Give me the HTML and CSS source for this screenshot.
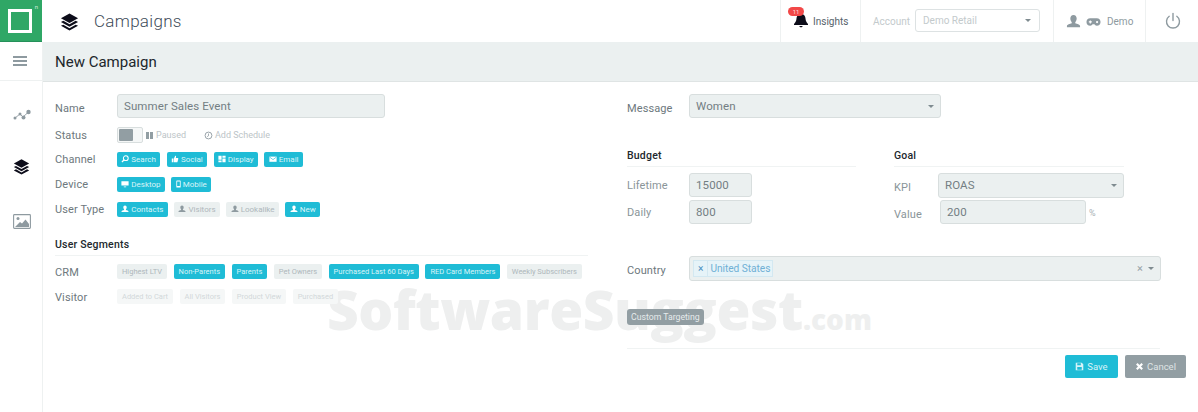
FILE: index.html
```html
<!DOCTYPE html>
<html lang="en">
<head>
<meta charset="utf-8">
<title>Campaigns</title>
<link rel="stylesheet" href="styles.css">
</head>
<body>
<svg class="sprite" width="0" height="0" aria-hidden="true">
  <defs>
    <symbol id="i-user" viewBox="0 0 16 16"><path d="M8 1c2.200 0 3.400 1.700 3.400 3.800 0 1.600-.7 3-1.500 3.800v1.300c1.900.7 5.100 1.400 5.100 3.100v1H1v-1c0-1.700 3.200-2.400 5.100-3.100V8.600C5.300 7.800 4.600 6.400 4.600 4.800 4.600 2.700 5.800 1 8 1z"/></symbol>
    <symbol id="i-layers" viewBox="0 0 20 20"><path d="M10 1.500 19 6.500 10 11.500 1 6.500z" fill="#0d0d1a"/><path d="M3.500 9.300 1 10.600 10 15.600 19 10.600 16.500 9.300 10 13z" fill="#0d0d1a"/><path d="M3.500 13.300 1 14.600 10 19.500 19 14.600 16.500 13.300 10 17z" fill="#0d0d1a"/></symbol>
  </defs>
</svg>
<div class="app">
  <header class="topbar">
    <div class="logo">
      <span class="logo-square"></span>
      <span class="logo-mark">n</span>
    </div>
    <div class="page-heading">
      <svg class="heading-icon"><use href="#i-layers"/></svg>
      <span>Campaigns</span>
    </div>
    <div class="top-item insights">
      <span class="bell-wrap">
        <svg class="bell" viewBox="0 0 16 16"><path d="M8 1c.8 0 1.300.5 1.400 1.100 2 .6 2.900 2.300 3.100 4.400.2 2.400 1 3.800 2.500 5.500v1H1v-1c1.500-1.700 2.300-3.100 2.500-5.500.2-2.100 1.100-3.800 3.100-4.400C6.700 1.500 7.200 1 8 1zM6.300 14h3.400c-.2.800-.9 1.300-1.700 1.300S6.500 14.800 6.300 14z" fill="#0d0d1a"/></svg>
        <span class="badge">11</span>
      </span>
      <span>Insights</span>
    </div>
    <div class="top-item account">
      <span class="account-label">Account</span>
      <div class="account-select"><span>Demo Retail</span><i class="caret"></i></div>
    </div>
    <div class="top-item user">
      <svg class="user-icon"><use href="#i-user"/></svg>
      <svg class="gamepad" viewBox="0 0 16 10"><path d="M4.500 1h7C14 1 15.500 2.800 15.500 5S14 9 11.500 9c-1.300 0-2-.8-2.500-1.500H7C6.500 8.200 5.800 9 4.500 9 2 9 .5 7.200.5 5S2 1 4.500 1z" fill="#8e9aa0"/><path d="M3 4.300h1V3.300h1.200v1h1v1.300h-1v1H4v-1H3z" fill="#fff"/><circle cx="11.800" cy="5" r="1.200" fill="#fff"/></svg>
      <span>Demo</span>
    </div>
    <div class="top-item power">
      <svg viewBox="0 0 18 18" class="power-icon"><path d="M5.200 4.300a6.500 6.500 0 1 0 7.600 0" fill="none" stroke="#8e9aa0" stroke-width="1.400" stroke-linecap="round"/><path d="M9 1.500v7" fill="none" stroke="#8e9aa0" stroke-width="1.400" stroke-linecap="round"/></svg>
    </div>
  </header>

  <div class="body-row">
    <nav class="sidebar">
      <div class="menu-cell">
        <span class="hamburger"><i></i><i></i><i></i></span>
      </div>
      <svg class="nav-icon nav-trend" viewBox="0 0 18 12"><path d="M2 9 7 5 10 8 15.500 3" fill="none" stroke="#8e9aa0" stroke-width=".9"/><circle cx="2" cy="9" r="1.500" fill="#8e9aa0"/><circle cx="7" cy="5" r="1.500" fill="#8e9aa0"/><circle cx="10.500" cy="8.500" r="2" fill="#8e9aa0"/><circle cx="15.500" cy="3" r="2.200" fill="#8e9aa0"/></svg>
      <svg class="nav-icon nav-layers"><use href="#i-layers"/></svg>
      <svg class="nav-icon nav-image" viewBox="0 0 18 15"><rect x=".6" y=".6" width="16.800" height="13.800" rx=".8" fill="#fff" stroke="#8e9aa0" stroke-width="1.100"/><circle cx="5" cy="4.500" r="1.500" fill="#8e9aa0"/><path d="M2 13 7 8 9 9.500 12.500 5.500 16 10v3z" fill="#8e9aa0"/></svg>
    </nav>

    <main class="main">
      <div class="watermark">SoftwareSuggest<span>.com</span></div>
      <div class="title-bar">New Campaign</div>
      <div class="columns">
        <section class="left-col">
          <div class="form-row row-name">
            <label class="row-label">Name</label>
            <div class="field field-name">Summer Sales Event</div>
          </div>
          <div class="form-row row-status">
            <label class="row-label">Status</label>
            <span class="toggle"><i></i></span>
            <span class="pause"><i></i><i></i></span>
            <span class="status-text">Paused</span>
            <svg class="clock" viewBox="0 0 10 10"><circle cx="5" cy="5" r="3.800" fill="none" stroke="#8e9aa0" stroke-width="1"/><path d="M5 2.800V5.300L3.500 6.300" fill="none" stroke="#8e9aa0" stroke-width=".9"/></svg>
            <span class="status-text">Add Schedule</span>
          </div>
          <div class="form-row row-chips">
            <label class="row-label">Channel</label>
            <div class="chips">
              <span class="chip on"><svg viewBox="0 0 10 10"><circle cx="6" cy="4" r="3" fill="none" stroke="#fff" stroke-width="1.300"/><path d="M4 6 1.200 8.800" stroke="#fff" stroke-width="1.600"/></svg>Search</span>
              <span class="chip on"><svg viewBox="0 0 10 10"><path d="M1 4.500h2v4.500H1zM3.600 4.500 5.300 1c.9 0 1.200.7 1 1.500l-.3 1.200h3v1.700L8 9H3.600z" fill="#fff"/></svg>Social</span>
              <span class="chip on"><svg viewBox="0 0 10 10"><path d="M.5 1h4v5h-4zM5.500 1h4v2.500h-4zM5.500 4.500h4v4.500h-4zM.5 7h4v2h-4z" fill="#fff"/></svg>Display</span>
              <span class="chip on"><svg viewBox="0 0 10 10"><path d="M.5 2h9v6.500h-9z" fill="#fff"/><path d="M1 2.800 5 5.800 9 2.800" fill="none" stroke="#1fbcd6" stroke-width=".8"/></svg>Email</span>
            </div>
          </div>
          <div class="form-row row-chips">
            <label class="row-label">Device</label>
            <div class="chips">
              <span class="chip on"><svg viewBox="0 0 10 10"><path d="M.5 1.500h9v5.500h-9zM3.500 8h3v1h-3z" fill="#fff"/></svg>Desktop</span>
              <span class="chip on"><svg class="narrow" viewBox="0 0 6 10"><path d="M1 .5h4a.7.7 0 0 1 .7.7v7.600a.7.7 0 0 1-.7.7H1a.7.7 0 0 1-.7-.7V1.200A.7.7 0 0 1 1 .5zm.3 1.500v5.500h3.400V2z" fill="#fff"/></svg>Mobile</span>
            </div>
          </div>
          <div class="form-row row-chips">
            <label class="row-label">User Type</label>
            <div class="chips">
              <span class="chip on"><svg><use href="#i-user" fill="#fff"/></svg>Contacts</span>
              <span class="chip off"><svg><use href="#i-user" fill="#8e9aa0"/></svg>Visitors</span>
              <span class="chip off"><svg><use href="#i-user" fill="#8e9aa0"/></svg>Lookalike</span>
              <span class="chip on"><svg><use href="#i-user" fill="#fff"/></svg>New</span>
            </div>
          </div>
          <h3 class="section-heading segments-heading">User Segments</h3>
          <div class="form-row row-seg">
            <label class="row-label">CRM</label>
            <div class="chips">
              <span class="chip off">Highest LTV</span>
              <span class="chip on">Non-Parents</span>
              <span class="chip on">Parents</span>
              <span class="chip off">Pet Owners</span>
              <span class="chip on">Purchased Last 60 Days</span>
              <span class="chip on">RED Card Members</span>
              <span class="chip off">Weekly Subscribers</span>
            </div>
          </div>
          <div class="form-row row-seg row-visitor">
            <label class="row-label">Visitor</label>
            <div class="chips">
              <span class="chip faint">Added to Cart</span>
              <span class="chip faint">All Visitors</span>
              <span class="chip faint">Product View</span>
              <span class="chip faint">Purchased</span>
            </div>
          </div>
        </section>

        <section class="right-col">
          <div class="form-row row-message">
            <label class="row-label">Message</label>
            <div class="field field-select field-message"><span>Women</span><i class="caret"></i></div>
          </div>
          <div class="split">
            <div class="budget">
              <h3 class="section-heading">Budget</h3>
              <div class="form-row row-num">
                <label class="row-label muted">Lifetime</label>
                <div class="field field-num">15000</div>
              </div>
              <div class="form-row row-num row-daily">
                <label class="row-label muted">Daily</label>
                <div class="field field-num">800</div>
              </div>
            </div>
            <div class="goal">
              <h3 class="section-heading">Goal</h3>
              <div class="form-row row-num row-kpi">
                <label class="row-label muted label-kpi">KPI</label>
                <div class="field field-select field-kpi"><span>ROAS</span><i class="caret"></i></div>
              </div>
              <div class="form-row row-num row-value">
                <label class="row-label muted label-value">Value</label>
                <div class="field field-value">200</div>
                <span class="percent">%</span>
              </div>
            </div>
          </div>
          <div class="form-row row-country">
            <label class="row-label">Country</label>
            <div class="field field-select field-country">
              <span class="token"><b>×</b><span>United States</span></span>
              <span class="clear">×</span><i class="caret"></i>
            </div>
          </div>
          <div class="custom-row"><span class="chip custom">Custom Targeting</span></div>
          <div class="actions">
            <button class="btn btn-save" type="button"><svg viewBox="0 0 10 10"><path d="M1 .8h6.500L9.200 2.500v6.700H.8V.8z" fill="#d6f3f8"/><path d="M2.500 1.500h4v2h-4zM2.500 5.500h5v3h-5z" fill="#1fbcd6"/></svg>Save</button>
            <button class="btn btn-cancel" type="button"><svg viewBox="0 0 10 10"><path d="M2 2 8 8M8 2 2 8" stroke="#fff" stroke-width="2.400"/></svg>Cancel</button>
          </div>
        </section>
      </div>
    </main>
  </div>
</div>
</body>
</html>
```
FILE: styles.css
```css
* { box-sizing: border-box; }
html, body { margin: 0; padding: 0; height: 100%; }
body {
  width: 1198px;
  height: 412px;
  overflow: hidden;
  background: #fff;
  font-family: Roboto, "Liberation Sans", sans-serif;
  color: #5f6b70;
}
.sprite { position: absolute; }
.app { display: flex; flex-direction: column; height: 412px; }

.topbar { display: flex; height: 42px; background: #fff; align-items: stretch; }
.logo {
  position: relative;
  width: 42px;
  background: #2fa766;
  border-bottom: 1px solid #25905a;
  display: flex;
  align-items: center;
  justify-content: center;
}
.logo-square { width: 24px; height: 24px; border: 3px solid #fff; margin-left: -2px; margin-top: 1px; }
.logo-mark { position: absolute; top: 3px; right: 4px; font-size: 6px; line-height: 7px; color: #cfeadb; }
.page-heading {
  display: flex;
  align-items: center;
  flex: 1;
  padding-left: 18px;
  font-size: 17px;
  font-weight: 300;
  letter-spacing: .3px;
  color: #3f4d5a;
}
.heading-icon { width: 19px; height: 19px; margin-right: 15px; }
.top-item {
  display: flex;
  flex: none;
  align-items: center;
  border-left: 1px solid #eef1f1;
  font-size: 10px;
}
.insights { width: 80px; padding-left: 12px; color: #55626a; }
.bell-wrap { position: relative; width: 16px; height: 16px; margin-right: 4px; margin-top: -2px; }
.bell { width: 16px; height: 16px; display: block; }
.badge {
  position: absolute;
  left: -5px;
  top: -5px;
  width: 16px;
  height: 9px;
  border-radius: 5px;
  background: #f24848;
  color: #fdd;
  font-size: 6px;
  line-height: 9px;
  text-align: center;
}
.account { width: 193px; padding-left: 12px; color: #c3cacc; }
.account-label { margin-right: 5px; }
.account-select {
  width: 125px;
  height: 23px;
  margin-top: -1px;
  padding: 0 8px 0 7px;
  border: 1px solid #dde2e3;
  border-radius: 3px;
  display: flex;
  align-items: center;
  justify-content: space-between;
}
.user { width: 92px; padding-left: 12px; color: #8e9aa0; }
.user-icon { width: 15px; height: 15px; fill: #8e9aa0; margin-right: 5px; }
.gamepad { width: 15px; height: 10px; margin-right: 6px; margin-top: 2px; }
.power { width: 53px; padding-left: 18px; }
.power-icon { width: 18px; height: 18px; }

.caret {
  width: 0;
  height: 0;
  border-left: 3px solid transparent;
  border-right: 3px solid transparent;
  border-top: 3px solid #7f8b90;
  flex: none;
}

.body-row { display: flex; flex: 1; min-height: 0; }
.sidebar {
  width: 43px;
  border-right: 1px solid #eef1f1;
  display: flex;
  flex-direction: column;
  align-items: center;
}
.menu-cell {
  width: 100%;
  height: 39px;
  border-bottom: 1px solid #eef1f1;
  display: flex;
  align-items: center;
  justify-content: center;
}
.hamburger { display: flex; flex-direction: column; gap: 2px; width: 14px; margin-left: -2px; }
.hamburger i { display: block; height: 2px; background: #8e9aa0; }
.nav-icon { display: block; flex: none; }
.nav-trend { width: 18px; height: 12px; margin-top: 28px; margin-left: 1px; }
.nav-layers { width: 17px; height: 17px; margin-top: 37px; margin-left: 1px; }
.nav-image { width: 18px; height: 15px; margin-top: 39px; margin-left: 1px; }

.main { position: relative; flex: 1; min-width: 0; }
.title-bar {
  position: relative;
  height: 40px;
  background: #ebf0f0;
  border-bottom: 1px solid #dfe4e4;
  padding-left: 12px;
  display: flex;
  align-items: center;
  font-size: 15px;
  letter-spacing: 0;
  color: #20262b;
}
.columns { position: relative; display: flex; padding: 12px 12px 0; }
.left-col { width: 533px; margin-right: 39px; }
.right-col { width: 559px; }

.form-row { display: flex; align-items: center; }
.row-label { flex: 0 0 62px; padding-top: 4px; font-size: 11px; letter-spacing: .1px; color: #6d787d; }
.muted { color: #8a9599; }

.field {
  height: 24px;
  background: #ebf0f0;
  border: 1px solid #d8dede;
  border-radius: 3px;
  padding: 0 6px;
  font-size: 11.500px;
  letter-spacing: .1px;
  color: #737e83;
  display: flex;
  align-items: center;
}
.field-select { justify-content: space-between; padding-right: 6px; }
.field-name { width: 268px; }
.row-name { height: 24px; }
.row-status { height: 16px; margin-top: 9px; }
.row-status .row-label { padding-top: 0; }
.toggle {
  width: 26px;
  height: 16px;
  border: 1px solid #d8dede;
  border-radius: 2px;
  background: #f5f7f7;
  margin-right: 3px;
  padding: 1px;
}
.toggle i { display: block; width: 14px; height: 12px; background: #929ea3; border-radius: 1px; }
.pause { display: flex; gap: 1px; margin-right: 3px; }
.pause i { display: block; width: 3px; height: 7px; background: #929ea3; }
.status-text { font-size: 9px; color: #bcc4c7; }
.clock { width: 9px; height: 9px; margin: 0 2px 0 18px; }
.row-chips { height: 16px; margin-top: 9px; }
.row-chips .row-label { padding-top: 0; }
.row-status + .row-chips { margin-top: 8px; }

.chips { display: flex; gap: 6.500px; }
.chip {
  height: 15px;
  border-radius: 2px;
  padding: 0 4.300px;
  font-size: 8px;
  letter-spacing: 0;
  display: inline-flex;
  align-items: center;
  white-space: nowrap;
  flex: none;
}
.chip svg { width: 8px; height: 8px; margin-right: 2px; flex: none; }
.chip svg.narrow { width: 5px; }
.on { background: #1fbcd6; color: #d9f4f8; }
.off { background: #ebf0f0; color: #aeb7bb; }
.faint { background: #f5f7f7; color: #d2d8da; }

.section-heading {
  margin: 0;
  height: 23px;
  border-bottom: 1px solid #f0f3f3;
  font-size: 10.500px;
  font-weight: 500;
  letter-spacing: .2px;
  color: #22282d;
  display: flex;
  align-items: center;
}
.segments-heading { margin-top: 16px; }
.row-seg { height: 15px; margin-top: 8px; }
.row-seg .row-label { padding-top: 1px; }
.row-seg .chips { gap: 6.500px; }
.row-seg .chip { font-size: 7.500px; padding: 0 5px; }
.row-visitor { margin-top: 10px; }

.field-message { width: 252px; }
.row-message { height: 24px; }
.split { display: flex; margin-top: 26px; }
.budget { width: 229px; margin-right: 38px; }
.goal { width: 230px; }
.row-num { margin-top: 6px; height: 24px; }
.row-num .row-label { padding-top: 0; }
.row-daily { margin-top: 3px; }
.field-num { width: 63px; }
.row-num .label-kpi { flex-basis: 44px; padding-top: 4px; }
.row-num .label-value { flex-basis: 46px; padding-top: 4px; }
.field-kpi { width: 186px; height: 25px; }
.row-value { margin-top: 3px; }
.field-value { width: 146px; }
.percent { font-size: 9px; color: #a8b1b5; margin-left: 3px; padding-top: 2px; }
.row-country { margin-top: 32px; height: 25px; }
.field-country { width: 472px; height: 25px; padding-left: 3px; }
.token {
  display: flex;
  align-items: center;
  height: 17px;
  background: #e6f3f8;
  border: 1px solid #d3e8f1;
  color: #6fb0d5;
  font-size: 10.200px;
  letter-spacing: -.05px;
  margin-right: auto;
}
.token b { font-weight: 400; padding: 0 4px; border-right: 1px solid #d3e8f1; line-height: 15px; color: #4a8fc0; }
.token span { padding: 0 2px 0 2px; }
.clear { font-size: 11px; color: #97a2a6; margin-right: 5px; }
.custom-row {
  margin-top: 24px;
  height: 44px;
  border-bottom: 1px solid #f0f3f3;
  width: 533px;
}
.custom { background: #929ea3; color: #e6ebec; height: 16px; font-size: 8.700px; border-radius: 3px; padding: 0 4px; }
.actions { display: flex; justify-content: flex-end; gap: 7px; margin-top: 6px; }
.btn {
  height: 23px;
  border: 0;
  border-radius: 2px;
  font-family: inherit;
  font-size: 9.500px;
  display: inline-flex;
  align-items: center;
  justify-content: center;
  padding: 0;
}
.btn svg { width: 9px; height: 9px; margin-right: 3px; }
.btn-save { width: 53px; background: #1fbcd6; color: #d6f3f8; }
.btn-cancel { width: 61px; background: #929ea3; color: #dfe4e5; }

.watermark {
  position: absolute;
  left: 284px;
  top: 232px;
  font-family: "Open Sans", "Liberation Sans", sans-serif;
  font-weight: 800;
  font-size: 55px;
  line-height: 70px;
  letter-spacing: -.4px;
  color: #eeefef;
  white-space: nowrap;
  pointer-events: none;
}
.watermark span { font-size: 28px; letter-spacing: 0; }
```
